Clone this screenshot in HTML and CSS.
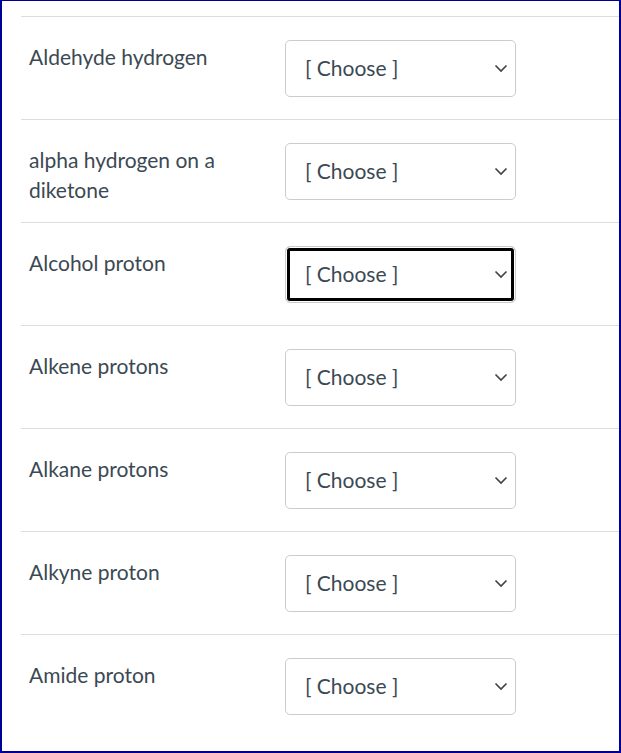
FILE: index.html
```html
<!DOCTYPE html>
<html lang="en">
<head>
<meta charset="utf-8">
<title>Matching</title>
<link rel="stylesheet" href="styles.css">
</head>
<body>
<div class="frame">
  <div class="list">
    <div class="row">
      <div class="label">Aldehyde hydrogen</div>
      <div class="answer"><select class="choice"><option>[ Choose ]</option></select></div>
    </div>
    <div class="row">
      <div class="label">alpha hydrogen on a diketone</div>
      <div class="answer"><select class="choice"><option>[ Choose ]</option></select></div>
    </div>
    <div class="row">
      <div class="label">Alcohol proton</div>
      <div class="answer"><select class="choice focused"><option>[ Choose ]</option></select></div>
    </div>
    <div class="row">
      <div class="label">Alkene protons</div>
      <div class="answer"><select class="choice"><option>[ Choose ]</option></select></div>
    </div>
    <div class="row">
      <div class="label">Alkane protons</div>
      <div class="answer"><select class="choice"><option>[ Choose ]</option></select></div>
    </div>
    <div class="row">
      <div class="label">Alkyne proton</div>
      <div class="answer"><select class="choice"><option>[ Choose ]</option></select></div>
    </div>
    <div class="row">
      <div class="label">Amide proton</div>
      <div class="answer"><select class="choice"><option>[ Choose ]</option></select></div>
    </div>
  </div>
</div>
</body>
</html>
```

FILE: styles.css
```css
html, body {
  margin: 0;
  padding: 0;
  background: #ffffff;
}

.frame {
  box-sizing: border-box;
  width: 621px;
  height: 753px;
  border: 2px solid #000096;
  border-top-width: 1px;
  padding-top: 15px;
  overflow: hidden;
  font-family: Lato, "Liberation Sans", sans-serif;
  color: #3b4953;
}

.list {
  margin-left: 19px;
}

.row {
  display: flex;
  align-items: flex-start;
  box-sizing: border-box;
  height: 103px;
  border-top: 1px solid #dddddd;
  padding-top: 23px;
}

.label {
  box-sizing: border-box;
  width: 264px;
  padding: 2px 40px 0 8px;
  font-size: 21px;
  line-height: 30px;
}

.choice {
  -webkit-appearance: none;
  appearance: none;
  box-sizing: border-box;
  width: 231px;
  height: 57px;
  margin: 0;
  padding: 0 40px 3px 19px;
  border: 1px solid #c7cdd1;
  border-radius: 5px;
  background-color: #ffffff;
  background-image: url("data:image/svg+xml,%3Csvg xmlns='http://www.w3.org/2000/svg' width='14' height='9' viewBox='0 0 14 9'%3E%3Cpath d='M1.5 1.5 L7 7 L12.5 1.5' fill='none' stroke='%23444' stroke-width='1.7'/%3E%3C/svg%3E");
  background-repeat: no-repeat;
  background-position: right 7px center;
  font-family: Lato, "Liberation Sans", sans-serif;
  font-size: 21px;
  color: #3b4953;
  outline: none;
}

.choice.focused {
  box-shadow: inset 0 0 0 1px #ffffff, inset 0 0 0 4px #000000;
}
```
